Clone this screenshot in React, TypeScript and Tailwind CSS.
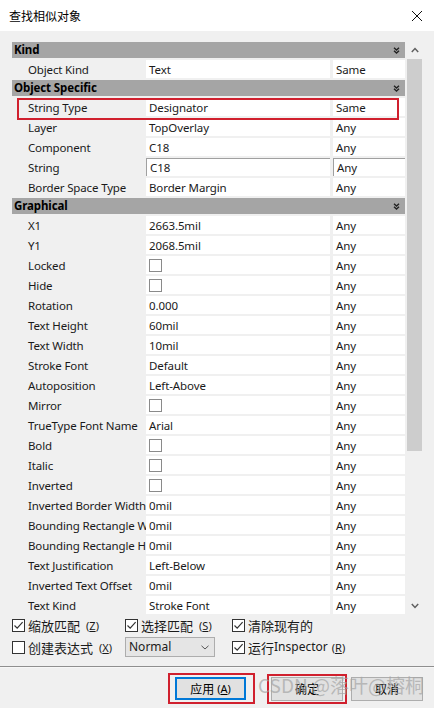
import React from "react";

const LAT = { fontFamily: '"Noto Sans", "Noto Sans CJK SC", sans-serif' } as const;
const CJK = { fontFamily: '"Noto Sans CJK SC", "Noto Sans", sans-serif' } as const;

type Row = { n: string; v: string; a: string; cb?: boolean; edit?: boolean; mark?: boolean };

const kind: Row[] = [{ n: "Object Kind", v: "Text", a: "Same" }];
const spec: Row[] = [
  { n: "String Type", v: "Designator", a: "Same", mark: true },
  { n: "Layer", v: "TopOverlay", a: "Any" },
  { n: "Component", v: "C18", a: "Any" },
  { n: "String", v: "C18", a: "Any", edit: true },
  { n: "Border Space Type", v: "Border Margin", a: "Any" },
];
const graph: Row[] = [
  { n: "X1", v: "2663.5mil", a: "Any" },
  { n: "Y1", v: "2068.5mil", a: "Any" },
  { n: "Locked", v: "", a: "Any", cb: true },
  { n: "Hide", v: "", a: "Any", cb: true },
  { n: "Rotation", v: "0.000", a: "Any" },
  { n: "Text Height", v: "60mil", a: "Any" },
  { n: "Text Width", v: "10mil", a: "Any" },
  { n: "Stroke Font", v: "Default", a: "Any" },
  { n: "Autoposition", v: "Left-Above", a: "Any" },
  { n: "Mirror", v: "", a: "Any", cb: true },
  { n: "TrueType Font Name", v: "Arial", a: "Any" },
  { n: "Bold", v: "", a: "Any", cb: true },
  { n: "Italic", v: "", a: "Any", cb: true },
  { n: "Inverted", v: "", a: "Any", cb: true },
  { n: "Inverted Border Width", v: "0mil", a: "Any" },
  { n: "Bounding Rectangle W", v: "0mil", a: "Any" },
  { n: "Bounding Rectangle H", v: "0mil", a: "Any" },
  { n: "Text Justification", v: "Left-Below", a: "Any" },
  { n: "Inverted Text Offset", v: "0mil", a: "Any" },
  { n: "Text Kind", v: "Stroke Font", a: "Any" },
];

function DoubleChevron() {
  return (
    <svg width="7" height="7" viewBox="0 0 7 7" className="block">
      <path d="M1 0.8 L3.5 3 L6 0.8" stroke="#222" strokeWidth="1.4" fill="none" />
      <path d="M1 3.8 L3.5 6 L6 3.8" stroke="#222" strokeWidth="1.4" fill="none" />
    </svg>
  );
}

function Header({ t }: { t: string }) {
  return (
    <div className="h-[18px] py-[1px]">
      <div className="h-[16px] bg-[#a5a5a5] flex items-center justify-between pl-[2px] pr-[5px]">
        <span className="text-[11.5px] font-bold text-black leading-none tracking-[-0.1px]" style={LAT}>{t}</span>
        <DoubleChevron />
      </div>
    </div>
  );
}

function GridRow({ r }: { r: Row }) {
  return (
    <div className="relative h-[20px] flex items-stretch py-[1px]">
      <div className="w-[134px] pl-[16px] pr-[1px] flex items-center overflow-hidden whitespace-nowrap text-[11.5px] tracking-[-0.15px] text-[#1a1a1a]" style={LAT}>
        <span className="leading-none pt-[1px]">{r.n}</span>
      </div>
      <div
        className={`w-[184px] bg-white flex items-center pl-[3px] text-[11.5px] tracking-[-0.1px] text-[#1a1a1a] whitespace-nowrap overflow-hidden ${r.edit ? "border-t border-l border-[#a0a0a0]" : ""}`}
        style={LAT}
      >
        {r.cb ? (
          <span className="block w-[13px] h-[13px] border border-[#8a8a8a] bg-white" />
        ) : (
          <span className="leading-none pt-[1px]">{r.v}</span>
        )}
      </div>
      <div
        className={`ml-[3px] w-[72px] bg-white flex items-center pl-[3px] text-[11.5px] tracking-[-0.1px] text-[#1a1a1a] ${r.edit ? "border-t border-l border-[#a0a0a0]" : ""}`}
        style={LAT}
      >
        <span className="leading-none pt-[1px]">{r.a}</span>
      </div>
      {r.mark && (
        <div className="absolute z-10 left-[5px] top-[1px] w-[382px] h-[22px] border-2 border-[#d0202e] pointer-events-none" />
      )}
    </div>
  );
}

function Check({ on }: { on: boolean }) {
  return (
    <svg width="13" height="13" viewBox="0 0 13 13" className="block shrink-0">
      <rect x="0.5" y="0.5" width="12" height="12" fill="#fff" stroke="#333" strokeWidth="1" />
      {on && <path d="M2.5 6.5 L5.2 9.2 L10.6 3.2" stroke="#333" strokeWidth="1.2" fill="none" />}
    </svg>
  );
}

function Opt({ on, label, key2 }: { on: boolean; label: string; key2?: string }) {
  return (
    <div className="flex items-center gap-[3px]">
      <Check on={on} />
      <span className="text-[13px] text-[#1a1a1a] leading-none whitespace-nowrap" style={CJK}>{label}</span>
      {key2 && (
        <span className="ml-[3px] text-[11px] text-[#1a1a1a] leading-none" style={LAT}>
          (<span className="underline">{key2}</span>)
        </span>
      )}
    </div>
  );
}

export default function App() {
  return (
    <div className="relative w-[434px] h-[708px] overflow-hidden bg-[#f0f0f0]">
      {/* title bar */}
      <div className="h-[31px] bg-white flex items-center justify-between pl-[9px] pr-[11px]">
        <span className="text-[12px] text-black leading-none" style={CJK}>查找相似对象</span>
        <svg width="12" height="12" viewBox="0 0 12 12" className="block">
          <path d="M1 1 L11 11 M11 1 L1 11" stroke="#111" strokeWidth="1" fill="none" />
        </svg>
      </div>

      {/* grid + scrollbar */}
      <div className="flex pt-[10px] pl-[12px]">
        <div className="w-[393px] flex flex-col">
          <Header t="Kind" />
          {kind.map((r) => <GridRow key={r.n} r={r} />)}
          <Header t="Object Specific" />
          {spec.map((r) => <GridRow key={r.n} r={r} />)}
          <Header t="Graphical" />
          {graph.map((r) => <GridRow key={r.n} r={r} />)}
        </div>
        <div className="ml-[2px] w-[15px] h-[574px] flex flex-col">
          <div className="h-[18px] flex items-center justify-center">
            <svg width="8" height="6" viewBox="0 0 8 6" className="block">
              <path d="M0.8 5 L4 1.5 L7.2 5" stroke="#606060" strokeWidth="1.5" fill="none" />
            </svg>
          </div>
          <div className="h-[392px] bg-[#cdcdcd]" />
          <div className="flex-1" />
          <div className="h-[18px] flex items-center justify-center">
            <svg width="8" height="6" viewBox="0 0 8 6" className="block">
              <path d="M0.8 1 L4 4.5 L7.2 1" stroke="#606060" strokeWidth="1.5" fill="none" />
            </svg>
          </div>
        </div>
      </div>

      {/* options */}
      <div className="h-[20px] flex items-center pl-[12px]">
        <div className="w-[113px]"><Opt on label="缩放匹配" key2="Z" /></div>
        <div className="w-[107px]"><Opt on label="选择匹配" key2="S" /></div>
        <Opt on label="清除现有的" />
      </div>
      <div className="mt-[1px] h-[22px] flex items-center pl-[12px]">
        <div className="w-[113px]"><Opt on={false} label="创建表达式" key2="X" /></div>
        <div className="w-[107px]">
          <div className="w-[90px] h-[20px] bg-[#e5e5e5] border border-[#adadad] flex items-center justify-between pl-[3px] pr-[5px]">
            <span className="text-[12px] text-[#1a1a1a] leading-none" style={LAT}>Normal</span>
            <svg width="8" height="5" viewBox="0 0 8 5" className="block">
              <path d="M0.5 0.8 L4 4 L7.5 0.8" stroke="#555" strokeWidth="1" fill="none" />
            </svg>
          </div>
        </div>
        <div className="flex items-center gap-[3px]">
          <Check on />
          <span className="text-[13px] text-[#1a1a1a] leading-none whitespace-nowrap" style={CJK}>运行</span>
          <span className="-ml-[3px] text-[12px] text-[#1a1a1a] leading-none" style={LAT}>Inspector</span>
          <span className="ml-[1px] text-[11px] text-[#1a1a1a] leading-none" style={LAT}>
            (<span className="underline">R</span>)
          </span>
        </div>
      </div>

      {/* separator */}
      <div className="mt-[8px] h-[1px] bg-[#8f8f8f]" />
      <div className="h-[1px] bg-[#f7f7f7]" />

      {/* buttons */}
      <div className="mt-[9px] flex justify-end pr-[11px] gap-[8px]">
        <div className="relative w-[71px] h-[23px] bg-[#e1e1e1] border-2 border-[#0078d7] flex items-center justify-center mr-[17px]">
          <span className="text-[12px] text-black leading-none" style={CJK}>应用</span>
          <span className="ml-[3px] text-[11px] text-black leading-none" style={LAT}>
            (<span className="underline">A</span>)
          </span>
          <div className="absolute -left-[9px] -top-[6px] w-[87px] h-[31px] border-2 border-[#d0202e]" />
        </div>
        <div className="relative w-[72px] h-[24px] bg-[#e1e1e1] border border-[#adadad] flex items-center justify-center">
          <span className="text-[12px] text-black leading-none" style={CJK}>确定</span>
          <div className="absolute -left-[5px] -top-[4px] w-[80px] h-[30px] border-2 border-[#d0202e]" />
        </div>
        <div className="w-[72px] h-[24px] bg-[#e1e1e1] border border-[#adadad] flex items-center justify-center">
          <span className="text-[12px] text-black leading-none" style={CJK}>取消</span>
        </div>
      </div>

      {/* watermark */}
      <div
        className="absolute left-[258px] top-[675px] text-[19px] leading-none whitespace-nowrap text-[rgba(165,165,165,0.7)]"
        style={CJK}
      >
        CSDN @落叶@榕桐
      </div>
    </div>
  );
}
